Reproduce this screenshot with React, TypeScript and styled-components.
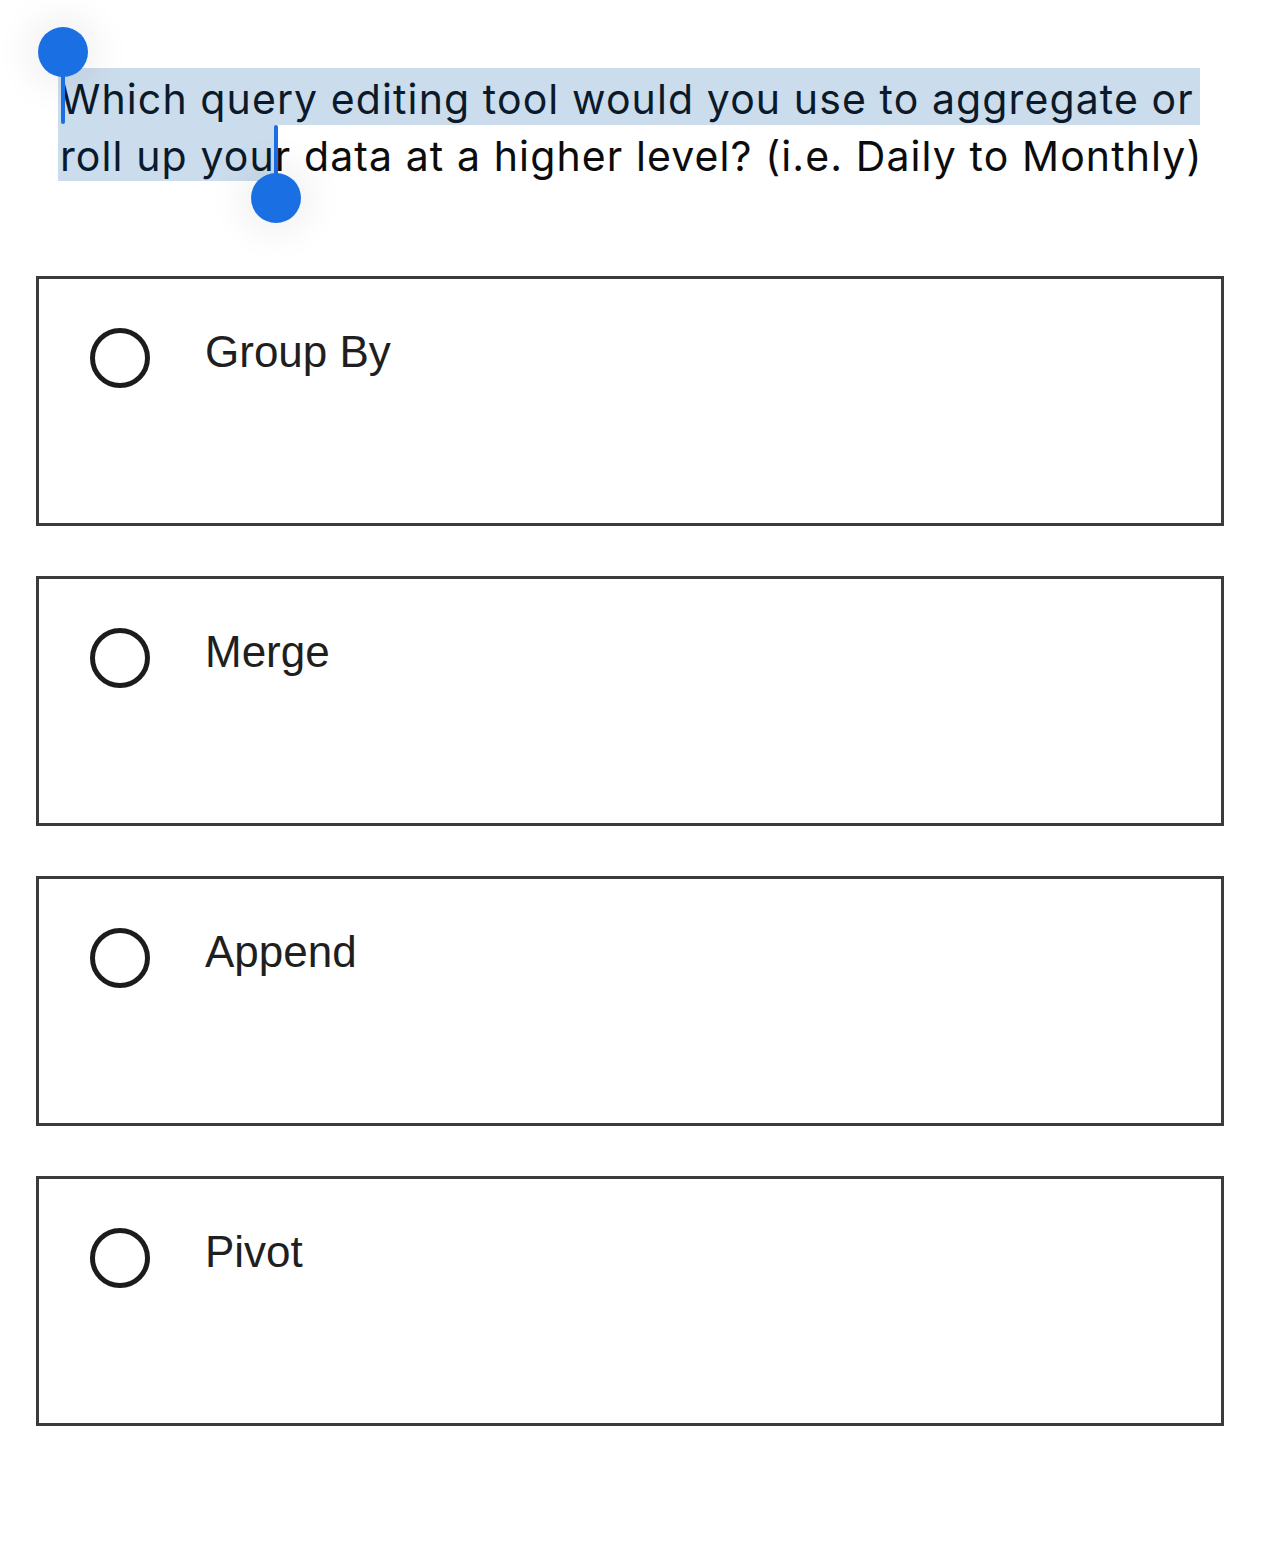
import React from "react";
import styled, { createGlobalStyle } from "styled-components";

const OPTIONS = ["Group By", "Merge", "Append", "Pivot"];

export default function App() {
  return (
    <>
      <GlobalStyle />
      <Page>
        <Question>
          <Line>
            <Selected $width={1140}>
              Which query editing tool would you use to aggregate or
            </Selected>
          </Line>
          <Line>
            <Selected>roll up you</Selected>r data at a higher level? (i.e.
            Daily to Monthly)
          </Line>
          <StartHandle>
            <Knob />
            <Stem $height={59} />
          </StartHandle>
          <EndHandle>
            <Stem $height={60} />
            <Knob />
          </EndHandle>
        </Question>
        <OptionList>
          {OPTIONS.map((label) => (
            <OptionBox key={label}>
              <Radio />
              <OptionLabel>{label}</OptionLabel>
            </OptionBox>
          ))}
        </OptionList>
      </Page>
    </>
  );
}

const GlobalStyle = createGlobalStyle`
  body {
    margin: 0;
    background: #ffffff;
  }
`;

const Page = styled.div`
  width: 1268px;
  min-height: 1567px;
  background: #ffffff;
  display: flex;
  flex-direction: column;
  padding-top: 68px;
  box-sizing: border-box;
`;

const Question = styled.div`
  position: relative;
  padding-left: 60px;
  font-family: Inter, "Noto Sans", sans-serif;
  font-size: 41px;
  color: #0c0c0c;
  letter-spacing: 1.1px;
`;

const Line = styled.div`
  height: 56.5px;
  line-height: 62px;
  white-space: nowrap;
`;

const Selected = styled.span<{ $width?: number }>`
  display: inline-block;
  height: 56.5px;
  vertical-align: top;
  background: #cbdcec;
  color: #0b1a2a;
  padding-left: 2px;
  margin-left: -2px;
  ${(p) => (p.$width ? `width: ${p.$width}px;` : "")}
`;

const HandleBase = styled.div`
  position: absolute;
  display: flex;
  flex-direction: column;
  align-items: center;
  width: 50px;
`;

const StartHandle = styled(HandleBase)`
  left: 38px;
  top: -41px;
`;

const EndHandle = styled(HandleBase)`
  left: 251px;
  top: 69px;
`;

const Knob = styled.div`
  width: 50px;
  height: 50px;
  border-radius: 50%;
  background: #1a6fe3;
  box-shadow: 0 0 34px 14px rgba(0, 0, 0, 0.05);
`;

const Stem = styled.div<{ $height: number }>`
  width: 4px;
  height: ${(p) => p.$height}px;
  background: #1a6fe3;
  border-radius: 2px;
  margin-top: -12px;
  margin-bottom: -12px;
`;

const OptionList = styled.div`
  display: flex;
  flex-direction: column;
  gap: 50px;
  margin-top: 95px;
  margin-left: 36px;
  width: 1188px;
`;

const OptionBox = styled.div`
  height: 250px;
  box-sizing: border-box;
  border: 3px solid #3b3b3b;
  display: flex;
  align-items: flex-start;
  padding: 49px 0 0 51px;
  gap: 55px;
`;

const Radio = styled.div`
  width: 60px;
  height: 60px;
  box-sizing: border-box;
  border: 5px solid #1c1c1c;
  border-radius: 50%;
  flex-shrink: 0;
`;

const OptionLabel = styled.div`
  font-family: "Liberation Sans", Arial, sans-serif;
  font-size: 44px;
  line-height: 48px;
  color: #1f1f1f;
`;
